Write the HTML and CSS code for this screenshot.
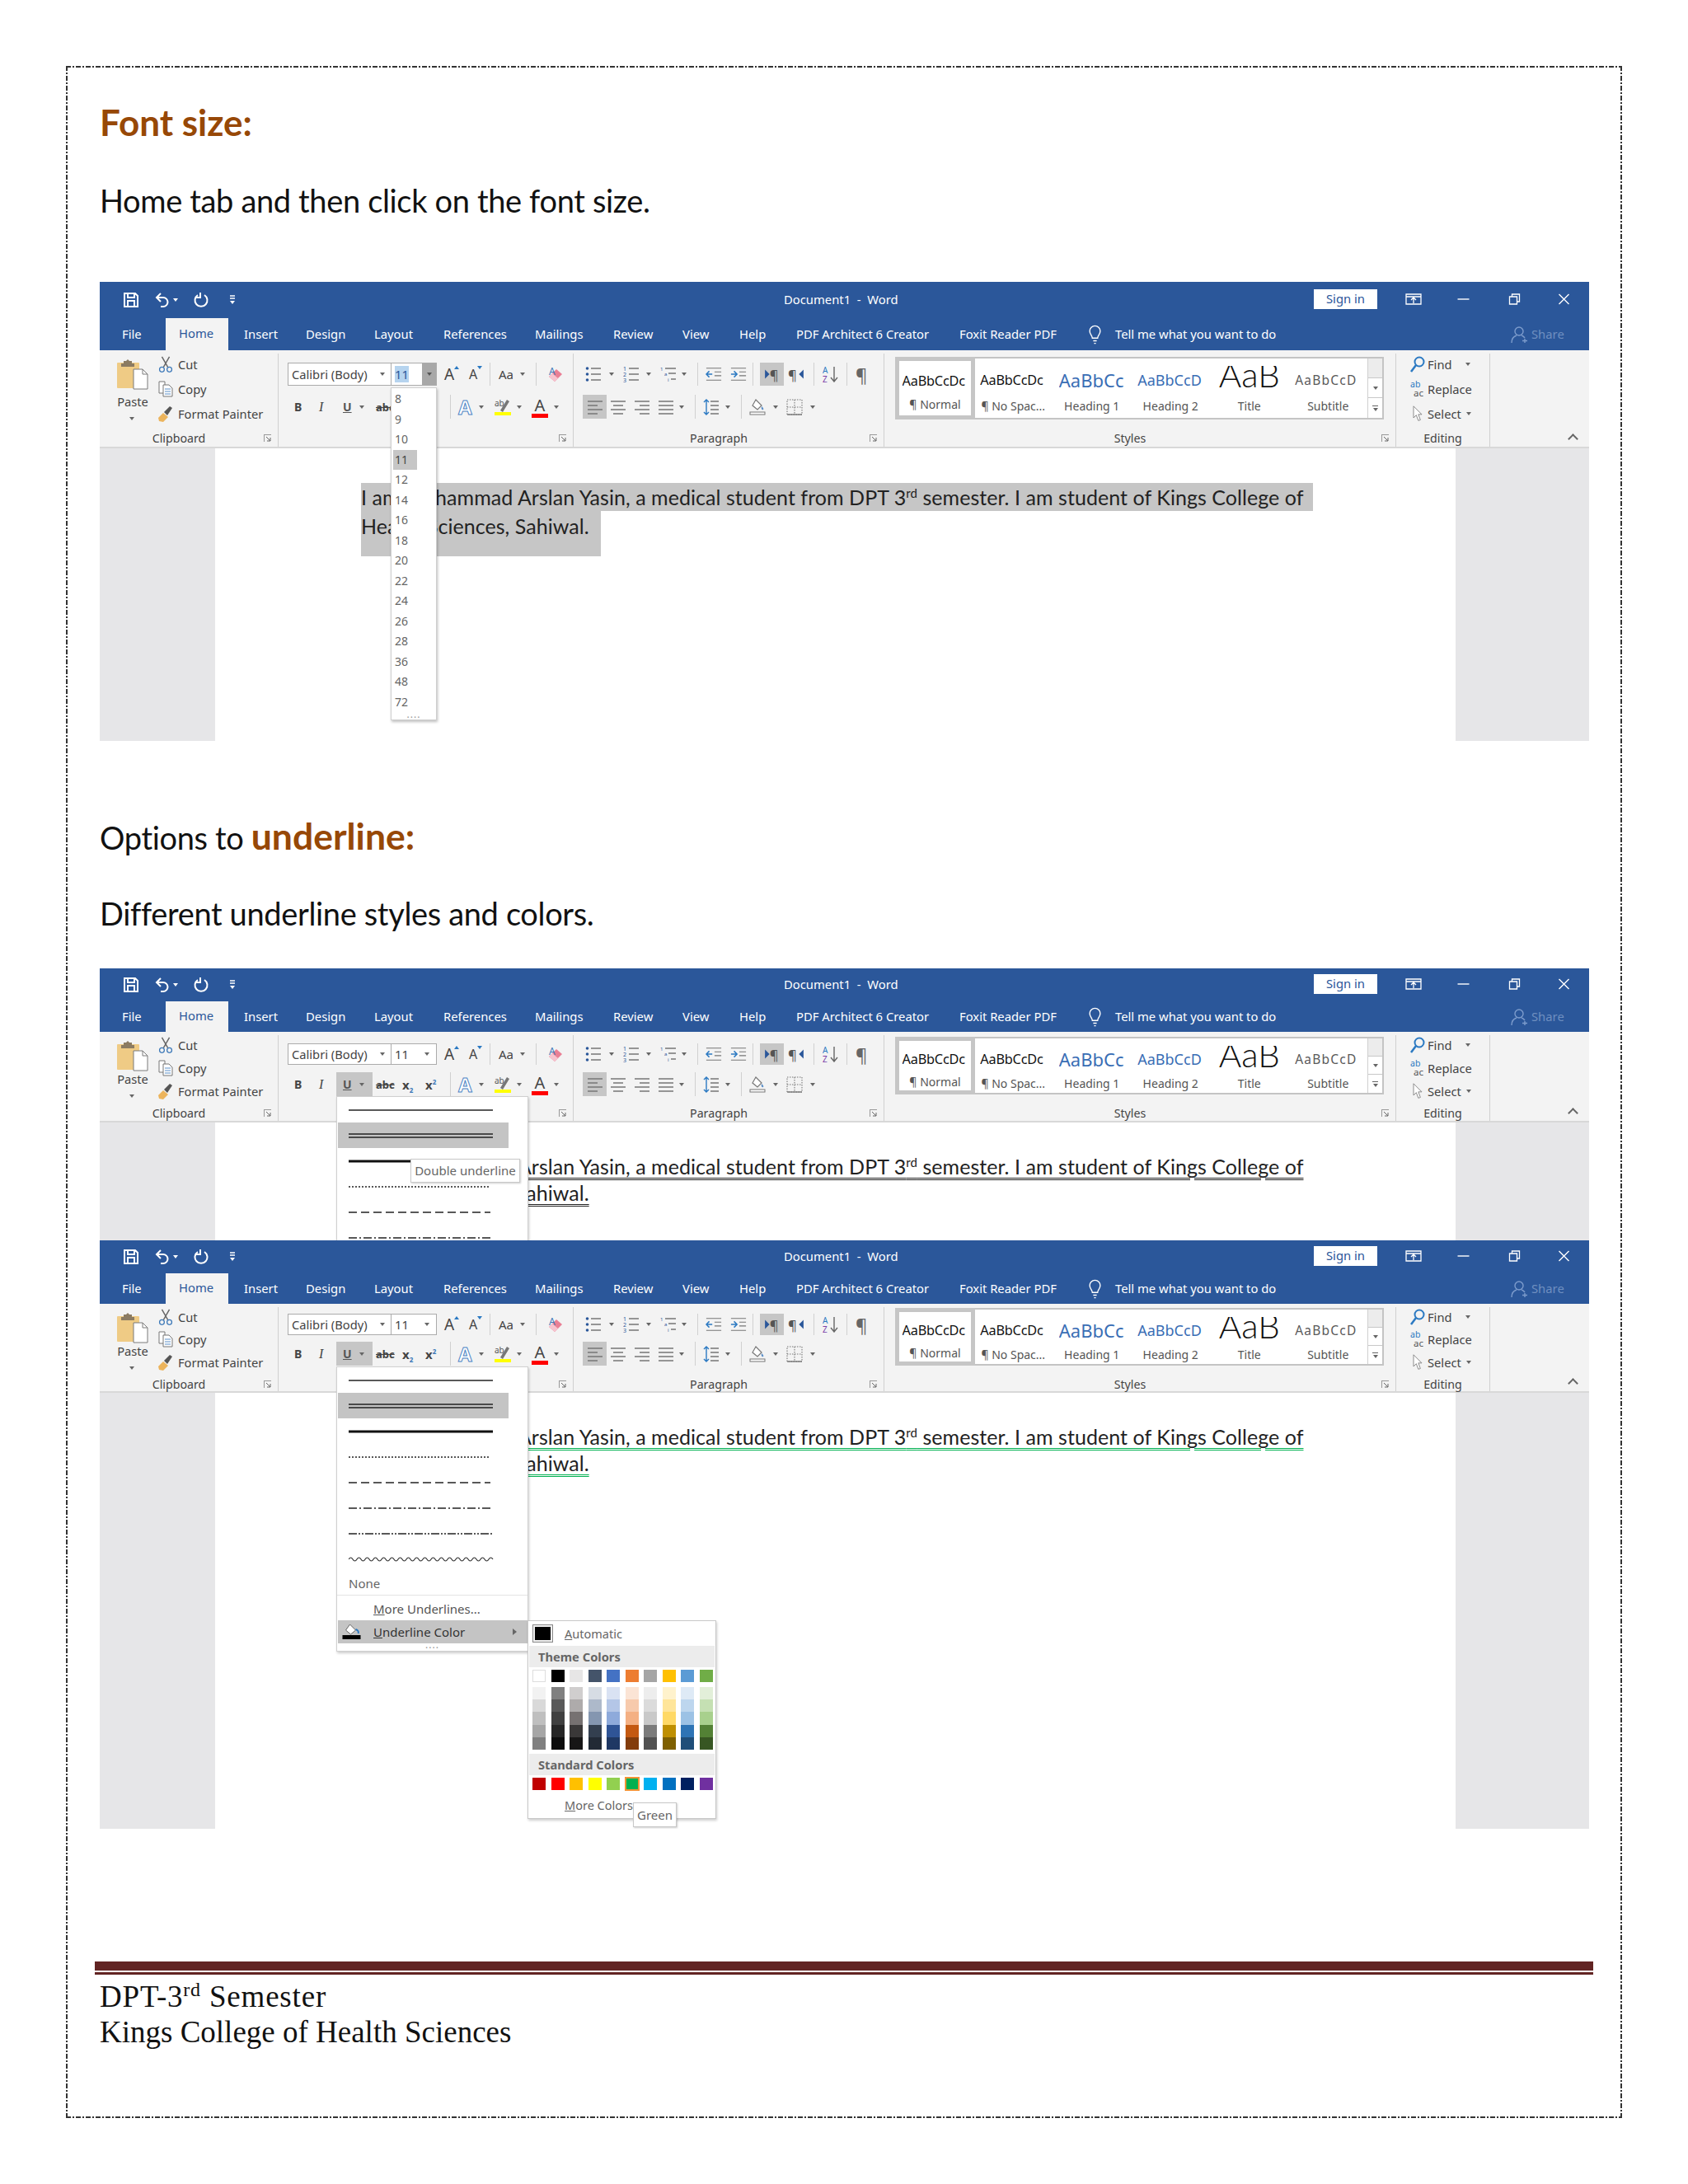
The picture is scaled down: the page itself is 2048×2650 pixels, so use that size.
FILE: index.html
```html
<!DOCTYPE html>
<html lang="en">
<head>
<meta charset="utf-8">
<title>Font size and underline options</title>
<link rel="stylesheet" href="styles.css">
</head>
<body>
<svg class="sprite" xmlns="http://www.w3.org/2000/svg">
<symbol id="save" viewBox="0 0 20 20"><path d="M2 2h13l3 3v13H2zM6 2v5h8V2M6 18v-7h8v7" fill="none" stroke="#fff" stroke-width="2"/></symbol>
<symbol id="undo" viewBox="0 0 20 20"><path d="M8 2L3 7l5 5M3 7h8a5 5 0 0 1 0 11H8" fill="none" stroke="#fff" stroke-width="2"/></symbol>
<symbol id="redo" viewBox="0 0 20 20"><path d="M6 4a7.500 7.500 0 1 0 8 0M9 1v6H3" fill="none" stroke="#fff" stroke-width="2"/></symbol>
<symbol id="qat" viewBox="0 0 8 12"><path d="M1 1h6M1 4h6" stroke="#fff" stroke-width="1.400"/><path d="M1 7h6l-3 4z" fill="#fff"/></symbol>
<symbol id="display" viewBox="0 0 20 14"><path d="M1 1h18v12H1zM1 4h18M10 12V6M7 8l3-3 3 3" fill="none" stroke="#fff" stroke-width="1.300"/></symbol>
<symbol id="min" viewBox="0 0 14 14"><path d="M0 7h14" stroke="#fff" stroke-width="1.400"/></symbol>
<symbol id="restore" viewBox="0 0 14 14"><path d="M1 4h9v9H1zM4 4V1h9v9h-3" fill="none" stroke="#fff" stroke-width="1.300"/></symbol>
<symbol id="close" viewBox="0 0 14 14"><path d="M1 1l12 12M13 1L1 13" stroke="#fff" stroke-width="1.400"/></symbol>
<symbol id="bulb" viewBox="0 0 16 22"><path d="M5 15c0-3-3-4-3-8a6 6 0 0 1 12 0c0 4-3 5-3 8zM6 18h4M7 21h2" fill="none" stroke="#fff" stroke-width="1.300"/></symbol>
<symbol id="person" viewBox="0 0 22 22"><circle cx="10" cy="7" r="5" fill="none" stroke="#7d9ccc" stroke-width="1.400"/><path d="M1 21c0-5 3-8 6-9M13 12c2 .5 3 1.500 4 3M17 16v5M14 18.500h6" fill="none" stroke="#7d9ccc" stroke-width="1.400"/></symbol>
<symbol id="paste" viewBox="0 0 38 38"><rect y="5" width="27" height="31" rx="1" fill="#efcb85"/><path d="M8 6V3h3l2-2 2 2h3v3h3v4H5V6z" fill="#8b7b62"/><path d="M20 13h11l6 6v18H20z" fill="#fff" stroke="#7a7a7a"/><path d="M31 13v6h6" fill="none" stroke="#7a7a7a"/></symbol>
<symbol id="cut" viewBox="0 0 20 22"><path d="M5 1l8 14M15 1L7 15" stroke="#666" stroke-width="1.600"/><circle cx="5" cy="18" r="3.200" fill="none" stroke="#3c78b8" stroke-width="1.400"/><circle cx="15" cy="18" r="3.200" fill="none" stroke="#3c78b8" stroke-width="1.400"/></symbol>
<symbol id="copy" viewBox="0 0 20 20"><path d="M2 1h7v14H2z" fill="#fff" stroke="#777"/><path d="M7 5h7l4 4v10H7z" fill="#fff" stroke="#777"/><path d="M9 10h7M9 13h7M9 16h7" stroke="#5b8fc8"/></symbol>
<symbol id="brush" viewBox="0 0 20 20"><path d="M2 19L1 15l6-6 6 5-6 6z" fill="#ecb45c"/><path d="M8 8l7-7 3 2-6 9z" fill="#555"/></symbol>
<symbol id="eraser" viewBox="0 0 20 20"><path d="M3 13l9-9 7 6-9 9z" fill="#ea7f95"/><path d="M3 13l4-4 7 6-4 4z" fill="#f6c4cf"/><text x="3" y="11" font-size="12" fill="#3c78b8" font-family="Noto Sans">A</text></symbol>
<symbol id="hilite" viewBox="0 0 20 20"><text x="0" y="9" font-size="10" fill="#555" font-family="Noto Sans">ab</text><path d="M7 14l8-13 3 2-8 13z" fill="#777"/><rect y="16" width="20" height="4" fill="#ffff00"/></symbol>
<symbol id="bul" viewBox="0 0 20 20"><g fill="#2b579a"><circle cx="2.500" cy="3" r="1.800"/><circle cx="2.500" cy="10" r="1.800"/><circle cx="2.500" cy="17" r="1.800"/></g><path d="M7 3h12M7 10h12M7 17h12" stroke="#777" stroke-width="1.300"/></symbol>
<symbol id="num" viewBox="0 0 20 20"><g fill="#2b579a" font-size="7" font-family="Noto Sans"><text y="6">1</text><text y="13">2</text><text y="20">3</text></g><path d="M7 3h12M7 10h12M7 17h12" stroke="#777" stroke-width="1.300"/></symbol>
<symbol id="multi" viewBox="0 0 20 20"><g fill="#2b579a" font-size="6" font-family="Noto Sans"><text y="6">1</text><text x="5" y="12">a</text><text x="9" y="19">i</text></g><path d="M6 3h13M10 9h9M13 16h6" stroke="#777" stroke-width="1.300"/></symbol>
<symbol id="dec" viewBox="0 0 22 20"><path d="M1 2h20M12 7h9M12 12h9M1 18h20" stroke="#777" stroke-width="1.300"/><path d="M9 10H2M5 6l-4 4 4 4" fill="none" stroke="#2b79c2" stroke-width="1.600"/></symbol>
<symbol id="inc" viewBox="0 0 22 20"><path d="M1 2h20M12 7h9M12 12h9M1 18h20" stroke="#777" stroke-width="1.300"/><path d="M1 10h7M5 6l4 4-4 4" fill="none" stroke="#2b79c2" stroke-width="1.600"/></symbol>
<symbol id="ltr" viewBox="0 0 18 18"><path d="M1 4v10l5-5z" fill="#2b579a"/><text x="6" y="15" font-size="15" fill="#555" font-family="Noto Sans">¶</text></symbol>
<symbol id="rtl" viewBox="0 0 18 18"><path d="M17 4v10l-5-5z" fill="#2b579a"/><text x="0" y="15" font-size="15" fill="#555" font-family="Noto Sans">¶</text></symbol>
<symbol id="sort" viewBox="0 0 20 20"><text x="0" y="9" font-size="10" fill="#2b79c2" font-family="Noto Sans">A</text><text x="0" y="20" font-size="10" fill="#7a3fa8" font-family="Noto Sans">Z</text><path d="M14 1v17M10 14l4 5 4-5" fill="none" stroke="#666" stroke-width="1.400"/></symbol>
<symbol id="lft" viewBox="0 0 20 20"><path d="M1 3h18M1 8h12M1 13h18M1 18h12" stroke="#777" stroke-width="1.400"/></symbol>
<symbol id="ctr" viewBox="0 0 20 20"><path d="M1 3h18M4 8h12M1 13h18M4 18h12" stroke="#777" stroke-width="1.400"/></symbol>
<symbol id="rgt" viewBox="0 0 20 20"><path d="M1 3h18M7 8h12M1 13h18M7 18h12" stroke="#777" stroke-width="1.400"/></symbol>
<symbol id="jus" viewBox="0 0 20 20"><path d="M1 3h18M1 8h18M1 13h18M1 18h18" stroke="#777" stroke-width="1.400"/></symbol>
<symbol id="lsp" viewBox="0 0 20 20"><path d="M4 1v18M1 4l3-3 3 3M1 16l3 3 3-3" fill="none" stroke="#2b79c2" stroke-width="1.400"/><path d="M9 3h10M9 8h10M9 13h10M9 18h10" stroke="#777" stroke-width="1.300"/></symbol>
<symbol id="shade" viewBox="0 0 20 20"><path d="M8 1l7 7-5 5-6-5z" fill="#fff" stroke="#777" stroke-width="1.200"/><path d="M15 9c2 2 3 3 2 4s-3 0-2-4" fill="#5b8fc8"/><rect x="1" y="16" width="18" height="3" fill="#fff" stroke="#777"/></symbol>
<symbol id="bord" viewBox="0 0 20 20"><path d="M1 1h18v18H1zM10 1v18M1 10h18" fill="none" stroke="#777" stroke-width="1.100" stroke-dasharray="1.500 1.500"/><path d="M1 19h18" stroke="#777" stroke-width="1.400"/></symbol>
<symbol id="launch" viewBox="0 0 10 10"><path d="M0 .5h9M.5 0v9" stroke="#999"/><path d="M3 3l5 5M8 4v4H4" fill="none" stroke="#666"/></symbol>
<symbol id="find" viewBox="0 0 20 20"><circle cx="12" cy="7" r="5.500" fill="none" stroke="#2b79c2" stroke-width="2"/><path d="M8 11l-6 8" stroke="#2b79c2" stroke-width="2.500"/></symbol>
<symbol id="repl" viewBox="0 0 20 20"><text x="1" y="8" font-size="10.500" fill="#2b79c2" font-family="Noto Sans">ab</text><text x="5" y="19" font-size="11.500" fill="#555" font-family="Noto Sans">ac</text></symbol>
<symbol id="sel" viewBox="0 0 16 24"><path d="M2 1v17l4-4 3 8 3-1-3-8h5z" fill="#fff" stroke="#777"/></symbol>
<symbol id="ucol" viewBox="0 0 22 20"><path d="M9 1l7 7-6 5-6-5z" fill="#fff" stroke="#666"/><path d="M16 7c3 1 4 3 3 5" fill="none" stroke="#2b79c2" stroke-width="2"/><rect y="14" width="22" height="5" fill="#000"/></symbol>
</svg>

<main class="frame">
<h1 class="head">Font size:</h1>
<p class="copy-line">Home tab and then click on the font size.</p>

<section class="word word-a">
<div class="title-bar">
<svg class="ico"><use href="#save"/></svg>
<span class="qa"><svg class="ico"><use href="#undo"/></svg><i class="ar ar-w"></i></span>
<svg class="ico"><use href="#redo"/></svg>
<svg class="ico-q"><use href="#qat"/></svg>
<span class="doc-name">Document1 &nbsp;-&nbsp; Word</span>
<span class="sign">Sign in</span>
<svg class="ico-d"><use href="#display"/></svg>
<svg class="ico-w"><use href="#min"/></svg>
<svg class="ico-w"><use href="#restore"/></svg>
<svg class="ico-w"><use href="#close"/></svg>
</div>
<nav class="tabs">
<span>File</span><span class="tab-on">Home</span><span>Insert</span><span>Design</span><span>Layout</span><span>References</span><span>Mailings</span><span>Review</span><span>View</span><span>Help</span><span>PDF Architect 6 Creator</span><span>Foxit Reader PDF</span><svg class="ico-b"><use href="#bulb"/></svg><span>Tell me what you want to do</span><svg class="ico-p"><use href="#person"/></svg><span class="share">Share</span>
</nav>
<div class="ribbon">
<div class="grp grp-clip">
<div class="grp-body clip">
<div class="paste"><svg class="ico-paste"><use href="#paste"/></svg><span class="paste-l">Paste</span><i class="ar"></i></div>
<div class="tools"><div class="tool"><svg class="ico"><use href="#cut"/></svg><span>Cut</span></div><div class="tool"><svg class="ico"><use href="#copy"/></svg><span>Copy</span></div><div class="tool"><svg class="ico"><use href="#brush"/></svg><span>Format Painter</span></div></div>
</div>
<div class="grp-foot"><span>Clipboard</span><svg class="ico-l"><use href="#launch"/></svg></div>
</div>
<div class="grp grp-font">
<div class="grp-body rows">
<div class="row f1"><span class="fbox">Calibri (Body)<i class="ar"></i></span><span class="sbox sbox-on"><b>11</b><i class="ar"></i></span><span class="ga">A<i class="up"></i></span><span class="ga ga-s">A<i class="dn"></i></span><i class="sep"></i><span class="aa">Aa</span><i class="ar"></i><i class="sep"></i><svg class="ico"><use href="#eraser"/></svg></div>
<div class="row f2"><b class="gl">B</b><i class="gl it">I</i><span class="uwrap"><u class="gl">U</u><i class="ar"></i></span><s class="abc">abc</s><span class="xs">x<sub>2</sub></span><span class="xs">x<sup>2</sup></span><i class="sep"></i><span class="tfx">A</span><i class="ar"></i><svg class="ico"><use href="#hilite"/></svg><i class="ar"></i><span class="fcol">A</span><i class="ar"></i></div>
</div>
<div class="grp-foot"><span></span><svg class="ico-l"><use href="#launch"/></svg></div>
</div>
<div class="grp grp-para">
<div class="grp-body rows">
<div class="row p1"><svg class="ico"><use href="#bul"/></svg><i class="ar"></i><svg class="ico"><use href="#num"/></svg><i class="ar"></i><svg class="ico"><use href="#multi"/></svg><i class="ar"></i><i class="sep"></i><svg class="ico"><use href="#dec"/></svg><svg class="ico"><use href="#inc"/></svg><i class="sep"></i><span class="tog"><svg class="ico"><use href="#ltr"/></svg></span><svg class="ico"><use href="#rtl"/></svg><i class="sep"></i><svg class="ico"><use href="#sort"/></svg><i class="sep"></i><span class="pil">¶</span></div>
<div class="row p2"><span class="tog"><svg class="ico"><use href="#lft"/></svg></span><svg class="ico"><use href="#ctr"/></svg><svg class="ico"><use href="#rgt"/></svg><svg class="ico"><use href="#jus"/></svg><i class="ar"></i><i class="sep"></i><svg class="ico"><use href="#lsp"/></svg><i class="ar"></i><i class="sep"></i><svg class="ico"><use href="#shade"/></svg><i class="ar"></i><svg class="ico"><use href="#bord"/></svg><i class="ar"></i></div>
</div>
<div class="grp-foot"><span>Paragraph</span><svg class="ico-l"><use href="#launch"/></svg></div>
</div>
<div class="grp grp-sty">
<div class="grp-body gal-wrap"><div class="gallery">
<div class="st st-on"><span class="pv pv-n">AaBbCcDc</span><span class="st-l">¶ Normal</span></div>
<div class="st"><span class="pv pv-n">AaBbCcDc</span><span class="st-l">¶ No Spac...</span></div>
<div class="st"><span class="pv pv-h1">AaBbCc</span><span class="st-l">Heading 1</span></div>
<div class="st"><span class="pv pv-h2">AaBbCcD</span><span class="st-l">Heading 2</span></div>
<div class="st"><span class="pv pv-t">AaB</span><span class="st-l">Title</span></div>
<div class="st"><span class="pv pv-s">AaBbCcD</span><span class="st-l">Subtitle</span></div>
<div class="scr"><span></span><span><i class="ar"></i></span><span><i class="ar"></i></span></div>
</div></div>
<div class="grp-foot"><span>Styles</span><svg class="ico-l"><use href="#launch"/></svg></div>
</div>
<div class="grp grp-edit">
<div class="grp-body tools edit"><div class="tool"><svg class="ico"><use href="#find"/></svg><span>Find</span><i class="ar ar-f"></i></div><div class="tool"><svg class="ico"><use href="#repl"/></svg><span>Replace</span></div><div class="tool"><svg class="ico"><use href="#sel"/></svg><span>Select</span><i class="ar ar-s"></i></div></div>
<div class="grp-foot foot-e"><span>Editing</span></div>
</div>
<div class="collapse"><i class="chev"></i></div>
</div>
<div class="doc">
<div class="side"></div>
<div class="page">
<p class="tx tx-sel tx-1">I am Muhammad Arslan Yasin, a medical student from DPT 3<sup>rd</sup> semester. I am student of Kings College of</p>
<p class="tx tx-sel tx-2">Health Sciences, Sahiwal.</p>
</div>
<div class="side"></div>
</div>
<div class="size-menu">
<span>8</span><span>9</span><span>10</span><span class="size-on">11</span><span>12</span><span>14</span><span>16</span><span>18</span><span>20</span><span>22</span><span>24</span><span>26</span><span>28</span><span>36</span><span>48</span><span>72</span><em class="grip">····</em>
</div>
</section>

<h2 class="copy-line sub">Options to <strong class="head-in">underline:</strong></h2>
<p class="copy-line sub2">Different underline styles and colors.</p>

<section class="word word-b">
<div class="title-bar">
<svg class="ico"><use href="#save"/></svg>
<span class="qa"><svg class="ico"><use href="#undo"/></svg><i class="ar ar-w"></i></span>
<svg class="ico"><use href="#redo"/></svg>
<svg class="ico-q"><use href="#qat"/></svg>
<span class="doc-name">Document1 &nbsp;-&nbsp; Word</span>
<span class="sign">Sign in</span>
<svg class="ico-d"><use href="#display"/></svg>
<svg class="ico-w"><use href="#min"/></svg>
<svg class="ico-w"><use href="#restore"/></svg>
<svg class="ico-w"><use href="#close"/></svg>
</div>
<nav class="tabs">
<span>File</span><span class="tab-on">Home</span><span>Insert</span><span>Design</span><span>Layout</span><span>References</span><span>Mailings</span><span>Review</span><span>View</span><span>Help</span><span>PDF Architect 6 Creator</span><span>Foxit Reader PDF</span><svg class="ico-b"><use href="#bulb"/></svg><span>Tell me what you want to do</span><svg class="ico-p"><use href="#person"/></svg><span class="share">Share</span>
</nav>
<div class="ribbon">
<div class="grp grp-clip">
<div class="grp-body clip">
<div class="paste"><svg class="ico-paste"><use href="#paste"/></svg><span class="paste-l">Paste</span><i class="ar"></i></div>
<div class="tools"><div class="tool"><svg class="ico"><use href="#cut"/></svg><span>Cut</span></div><div class="tool"><svg class="ico"><use href="#copy"/></svg><span>Copy</span></div><div class="tool"><svg class="ico"><use href="#brush"/></svg><span>Format Painter</span></div></div>
</div>
<div class="grp-foot"><span>Clipboard</span><svg class="ico-l"><use href="#launch"/></svg></div>
</div>
<div class="grp grp-font">
<div class="grp-body rows">
<div class="row f1"><span class="fbox">Calibri (Body)<i class="ar"></i></span><span class="sbox">11<i class="ar"></i></span><span class="ga">A<i class="up"></i></span><span class="ga ga-s">A<i class="dn"></i></span><i class="sep"></i><span class="aa">Aa</span><i class="ar"></i><i class="sep"></i><svg class="ico"><use href="#eraser"/></svg></div>
<div class="row f2"><b class="gl">B</b><i class="gl it">I</i><span class="uwrap uwrap-on"><u class="gl">U</u><i class="ar"></i></span><s class="abc">abc</s><span class="xs">x<sub>2</sub></span><span class="xs">x<sup>2</sup></span><i class="sep"></i><span class="tfx">A</span><i class="ar"></i><svg class="ico"><use href="#hilite"/></svg><i class="ar"></i><span class="fcol">A</span><i class="ar"></i></div>
</div>
<div class="grp-foot"><span></span><svg class="ico-l"><use href="#launch"/></svg></div>
</div>
<div class="grp grp-para">
<div class="grp-body rows">
<div class="row p1"><svg class="ico"><use href="#bul"/></svg><i class="ar"></i><svg class="ico"><use href="#num"/></svg><i class="ar"></i><svg class="ico"><use href="#multi"/></svg><i class="ar"></i><i class="sep"></i><svg class="ico"><use href="#dec"/></svg><svg class="ico"><use href="#inc"/></svg><i class="sep"></i><span class="tog"><svg class="ico"><use href="#ltr"/></svg></span><svg class="ico"><use href="#rtl"/></svg><i class="sep"></i><svg class="ico"><use href="#sort"/></svg><i class="sep"></i><span class="pil">¶</span></div>
<div class="row p2"><span class="tog"><svg class="ico"><use href="#lft"/></svg></span><svg class="ico"><use href="#ctr"/></svg><svg class="ico"><use href="#rgt"/></svg><svg class="ico"><use href="#jus"/></svg><i class="ar"></i><i class="sep"></i><svg class="ico"><use href="#lsp"/></svg><i class="ar"></i><i class="sep"></i><svg class="ico"><use href="#shade"/></svg><i class="ar"></i><svg class="ico"><use href="#bord"/></svg><i class="ar"></i></div>
</div>
<div class="grp-foot"><span>Paragraph</span><svg class="ico-l"><use href="#launch"/></svg></div>
</div>
<div class="grp grp-sty">
<div class="grp-body gal-wrap"><div class="gallery">
<div class="st st-on"><span class="pv pv-n">AaBbCcDc</span><span class="st-l">¶ Normal</span></div>
<div class="st"><span class="pv pv-n">AaBbCcDc</span><span class="st-l">¶ No Spac...</span></div>
<div class="st"><span class="pv pv-h1">AaBbCc</span><span class="st-l">Heading 1</span></div>
<div class="st"><span class="pv pv-h2">AaBbCcD</span><span class="st-l">Heading 2</span></div>
<div class="st"><span class="pv pv-t">AaB</span><span class="st-l">Title</span></div>
<div class="st"><span class="pv pv-s">AaBbCcD</span><span class="st-l">Subtitle</span></div>
<div class="scr"><span></span><span><i class="ar"></i></span><span><i class="ar"></i></span></div>
</div></div>
<div class="grp-foot"><span>Styles</span><svg class="ico-l"><use href="#launch"/></svg></div>
</div>
<div class="grp grp-edit">
<div class="grp-body tools edit"><div class="tool"><svg class="ico"><use href="#find"/></svg><span>Find</span><i class="ar ar-f"></i></div><div class="tool"><svg class="ico"><use href="#repl"/></svg><span>Replace</span></div><div class="tool"><svg class="ico"><use href="#sel"/></svg><span>Select</span><i class="ar ar-s"></i></div></div>
<div class="grp-foot foot-e"><span>Editing</span></div>
</div>
<div class="collapse"><i class="chev"></i></div>
</div>
<div class="doc">
<div class="side"></div>
<div class="page">
<p class="tx tx-u">I am Muhammad Arslan Yasin, a medical student from DPT 3<sup>rd</sup> semester. I am student of Kings College of</p>
<p class="tx tx-u">Health Sciences, Sahiwal.</p>
</div>
<div class="side"></div>
</div>
<div class="ul-menu">
<div class="ul-row"><svg class="ul"><line class="l1" x1="0" x2="175" y1="4" y2="4"/></svg></div>
<div class="ul-row ul-on"><svg class="ul"><line class="l1" x1="0" x2="175" y1="2" y2="2"/><line class="l1" x1="0" x2="175" y1="6" y2="6"/></svg></div>
<div class="ul-row"><svg class="ul"><line class="l3" x1="0" x2="175" y1="4" y2="4"/></svg></div>
<div class="ul-row"><svg class="ul"><line class="ld" x1="0" x2="172" y1="4" y2="4"/></svg></div>
<div class="ul-row"><svg class="ul"><line class="lh" x1="0" x2="172" y1="4" y2="4"/></svg></div>
<div class="ul-row"><svg class="ul"><line class="lp" x1="0" x2="175" y1="4" y2="4"/></svg></div>
</div>
<div class="tip tip-dbl">Double underline</div>
</section>

<section class="word word-c">
<div class="title-bar">
<svg class="ico"><use href="#save"/></svg>
<span class="qa"><svg class="ico"><use href="#undo"/></svg><i class="ar ar-w"></i></span>
<svg class="ico"><use href="#redo"/></svg>
<svg class="ico-q"><use href="#qat"/></svg>
<span class="doc-name">Document1 &nbsp;-&nbsp; Word</span>
<span class="sign">Sign in</span>
<svg class="ico-d"><use href="#display"/></svg>
<svg class="ico-w"><use href="#min"/></svg>
<svg class="ico-w"><use href="#restore"/></svg>
<svg class="ico-w"><use href="#close"/></svg>
</div>
<nav class="tabs">
<span>File</span><span class="tab-on">Home</span><span>Insert</span><span>Design</span><span>Layout</span><span>References</span><span>Mailings</span><span>Review</span><span>View</span><span>Help</span><span>PDF Architect 6 Creator</span><span>Foxit Reader PDF</span><svg class="ico-b"><use href="#bulb"/></svg><span>Tell me what you want to do</span><svg class="ico-p"><use href="#person"/></svg><span class="share">Share</span>
</nav>
<div class="ribbon">
<div class="grp grp-clip">
<div class="grp-body clip">
<div class="paste"><svg class="ico-paste"><use href="#paste"/></svg><span class="paste-l">Paste</span><i class="ar"></i></div>
<div class="tools"><div class="tool"><svg class="ico"><use href="#cut"/></svg><span>Cut</span></div><div class="tool"><svg class="ico"><use href="#copy"/></svg><span>Copy</span></div><div class="tool"><svg class="ico"><use href="#brush"/></svg><span>Format Painter</span></div></div>
</div>
<div class="grp-foot"><span>Clipboard</span><svg class="ico-l"><use href="#launch"/></svg></div>
</div>
<div class="grp grp-font">
<div class="grp-body rows">
<div class="row f1"><span class="fbox">Calibri (Body)<i class="ar"></i></span><span class="sbox">11<i class="ar"></i></span><span class="ga">A<i class="up"></i></span><span class="ga ga-s">A<i class="dn"></i></span><i class="sep"></i><span class="aa">Aa</span><i class="ar"></i><i class="sep"></i><svg class="ico"><use href="#eraser"/></svg></div>
<div class="row f2"><b class="gl">B</b><i class="gl it">I</i><span class="uwrap uwrap-on"><u class="gl">U</u><i class="ar"></i></span><s class="abc">abc</s><span class="xs">x<sub>2</sub></span><span class="xs">x<sup>2</sup></span><i class="sep"></i><span class="tfx">A</span><i class="ar"></i><svg class="ico"><use href="#hilite"/></svg><i class="ar"></i><span class="fcol">A</span><i class="ar"></i></div>
</div>
<div class="grp-foot"><span></span><svg class="ico-l"><use href="#launch"/></svg></div>
</div>
<div class="grp grp-para">
<div class="grp-body rows">
<div class="row p1"><svg class="ico"><use href="#bul"/></svg><i class="ar"></i><svg class="ico"><use href="#num"/></svg><i class="ar"></i><svg class="ico"><use href="#multi"/></svg><i class="ar"></i><i class="sep"></i><svg class="ico"><use href="#dec"/></svg><svg class="ico"><use href="#inc"/></svg><i class="sep"></i><span class="tog"><svg class="ico"><use href="#ltr"/></svg></span><svg class="ico"><use href="#rtl"/></svg><i class="sep"></i><svg class="ico"><use href="#sort"/></svg><i class="sep"></i><span class="pil">¶</span></div>
<div class="row p2"><span class="tog"><svg class="ico"><use href="#lft"/></svg></span><svg class="ico"><use href="#ctr"/></svg><svg class="ico"><use href="#rgt"/></svg><svg class="ico"><use href="#jus"/></svg><i class="ar"></i><i class="sep"></i><svg class="ico"><use href="#lsp"/></svg><i class="ar"></i><i class="sep"></i><svg class="ico"><use href="#shade"/></svg><i class="ar"></i><svg class="ico"><use href="#bord"/></svg><i class="ar"></i></div>
</div>
<div class="grp-foot"><span>Paragraph</span><svg class="ico-l"><use href="#launch"/></svg></div>
</div>
<div class="grp grp-sty">
<div class="grp-body gal-wrap"><div class="gallery">
<div class="st st-on"><span class="pv pv-n">AaBbCcDc</span><span class="st-l">¶ Normal</span></div>
<div class="st"><span class="pv pv-n">AaBbCcDc</span><span class="st-l">¶ No Spac...</span></div>
<div class="st"><span class="pv pv-h1">AaBbCc</span><span class="st-l">Heading 1</span></div>
<div class="st"><span class="pv pv-h2">AaBbCcD</span><span class="st-l">Heading 2</span></div>
<div class="st"><span class="pv pv-t">AaB</span><span class="st-l">Title</span></div>
<div class="st"><span class="pv pv-s">AaBbCcD</span><span class="st-l">Subtitle</span></div>
<div class="scr"><span></span><span><i class="ar"></i></span><span><i class="ar"></i></span></div>
</div></div>
<div class="grp-foot"><span>Styles</span><svg class="ico-l"><use href="#launch"/></svg></div>
</div>
<div class="grp grp-edit">
<div class="grp-body tools edit"><div class="tool"><svg class="ico"><use href="#find"/></svg><span>Find</span><i class="ar ar-f"></i></div><div class="tool"><svg class="ico"><use href="#repl"/></svg><span>Replace</span></div><div class="tool"><svg class="ico"><use href="#sel"/></svg><span>Select</span><i class="ar ar-s"></i></div></div>
<div class="grp-foot foot-e"><span>Editing</span></div>
</div>
<div class="collapse"><i class="chev"></i></div>
</div>
<div class="doc">
<div class="side"></div>
<div class="page">
<p class="tx tx-u tx-g">I am Muhammad Arslan Yasin, a medical student from DPT 3<sup>rd</sup> semester. I am student of Kings College of</p>
<p class="tx tx-u tx-g">Health Sciences, Sahiwal.</p>
</div>
<div class="side"></div>
</div>
<div class="ul-menu ul-full">
<div class="ul-row"><svg class="ul"><line class="l1" x1="0" x2="175" y1="4" y2="4"/></svg></div>
<div class="ul-row ul-on"><svg class="ul"><line class="l1" x1="0" x2="175" y1="2" y2="2"/><line class="l1" x1="0" x2="175" y1="6" y2="6"/></svg></div>
<div class="ul-row"><svg class="ul"><line class="l3" x1="0" x2="175" y1="4" y2="4"/></svg></div>
<div class="ul-row"><svg class="ul"><line class="ld" x1="0" x2="172" y1="4" y2="4"/></svg></div>
<div class="ul-row"><svg class="ul"><line class="lh" x1="0" x2="172" y1="4" y2="4"/></svg></div>
<div class="ul-row"><svg class="ul"><line class="lp" x1="0" x2="175" y1="4" y2="4"/></svg></div>
<div class="ul-row"><svg class="ul"><line class="lpp" x1="0" x2="175" y1="4" y2="4"/></svg></div>
<div class="ul-row"><svg class="ul"><path class="lw" d="M0 4q2.500-4 5 0t5 0t5 0t5 0t5 0t5 0t5 0t5 0t5 0t5 0t5 0t5 0t5 0t5 0t5 0t5 0t5 0t5 0t5 0t5 0t5 0t5 0t5 0t5 0t5 0t5 0t5 0t5 0t5 0t5 0t5 0t5 0t5 0t5 0t5 0"/></svg></div>
<div class="ul-none">None</div>
<div class="ul-more"><span class="acc">M</span>ore Underlines...</div>
<div class="ul-color"><svg class="ico-uc"><use href="#ucol"/></svg><span class="ul-ctext"><span class="acc">U</span>nderline Color</span><i class="ar-r"></i></div>
<em class="grip grip-u">····</em>
</div>
<div class="col-menu">
<div class="auto"><span class="auto-sw"><i></i></span><span><span class="acc">A</span>utomatic</span></div>
<div class="col-h">Theme Colors</div>
<div class="sw-row"><i class="t1"></i><i class="t2"></i><i class="t3"></i><i class="t4"></i><i class="t5"></i><i class="t6"></i><i class="t7"></i><i class="t8"></i><i class="t9"></i><i class="t10"></i></div>
<div class="sw-row sw-sh"><i class="s1"></i><i class="s2"></i><i class="s3"></i><i class="s4"></i><i class="s5"></i><i class="s6"></i><i class="s7"></i><i class="s8"></i><i class="s9"></i><i class="s10"></i></div>
<div class="col-h col-h2">Standard Colors</div>
<div class="sw-row"><i class="c1"></i><i class="c2"></i><i class="c3"></i><i class="c4"></i><i class="c5"></i><i class="c6 c-on"></i><i class="c7"></i><i class="c8"></i><i class="c9"></i><i class="c10"></i></div>
<div class="more-c"><span class="acc">M</span>ore Colors</div>
</div>
<div class="tip tip-g">Green</div>
</section>

<footer class="foot">
<div class="rule"></div>
<p class="foot-t foot-a">DPT-3<sup>rd</sup> Semester</p>
<p class="foot-t">Kings College of Health Sciences</p>
</footer>
</main>
</body>
</html>
```
FILE: styles.css
```css
* { box-sizing: border-box; }
html, body { margin: 0; padding: 0; background: #fff; }
body { font-family: "Noto Sans", sans-serif; color: #444; }
p, h1, h2 { margin: 0; font-weight: 400; }
.sprite { position: absolute; width: 0; height: 0; overflow: hidden; }

.frame {
  margin: 80px 0 0 80px;
  width: 1888px;
  height: 2490px;
  padding: 38px 0 0 41px;
  background:
    repeating-linear-gradient(90deg, #333 0 6px, transparent 6px 8px, #333 8px 10px, transparent 10px 12px) top / 100% 2px no-repeat,
    repeating-linear-gradient(90deg, #333 0 6px, transparent 6px 8px, #333 8px 10px, transparent 10px 12px) bottom / 100% 2px no-repeat,
    repeating-linear-gradient(180deg, #333 0 6px, transparent 6px 8px, #333 8px 10px, transparent 10px 12px) left / 2px 100% no-repeat,
    repeating-linear-gradient(180deg, #333 0 6px, transparent 6px 8px, #333 8px 10px, transparent 10px 12px) right / 2px 100% no-repeat;
}
.head { font: 700 44px/60px Lato, sans-serif; color: #974806; height: 60px; }
.head-in { font: 700 44.500px/60px Lato, sans-serif; color: #974806; letter-spacing: 0; }
.copy-line { font: 400 38px/60px Lato, sans-serif; color: #111; height: 60px; margin-top: 35px; letter-spacing: -.35px; }
.sub { margin-top: 85px; }
.sub2 { margin-top: 34px; }

.word {
  --title: 44px; --tabs: 39px; --rib: 119px;
  --r1t: 15px; --r1h: 28px; --r2g: 11px; --fm: 0px;
  --tool: 30px; --toolt: -2px; --pad: 41px; --lh: 35px; --galt: 8px; --galh: 76px; --pvh: 50px; --pastel: 4px;
  position: relative;
  width: 1807px;
  display: flex;
  flex-direction: column;
  overflow: hidden;
  background: #fff;
}
.word-a { height: 557px; margin-top: 69px; }
.word-b { height: 330px; margin-top: 37px; --title: 40px; --tabs: 37px; --rib: 110px; --r1t: 14px; --r1h: 26px; --r2g: 9px; --tool: 28px; --toolt: -2px; --pad: 37px; --lh: 32px; --galt: 6px; --galh: 70px; --pvh: 47px; --pastel: -1px; --fm: 1px; }
.word-c { height: 714px; --title: 40px; --tabs: 37px; --rib: 108px; --r1t: 12px; --r1h: 26px; --r2g: 8px; --tool: 27.500px; --toolt: -2px; --pad: 37px; --lh: 32px; --galt: 5px; --galh: 70px; --pvh: 47px; --pastel: -1px; --fm: 2px; }

.title-bar {
  height: var(--title);
  background: #2b579a;
  color: #fff;
  display: grid;
  grid-template-columns: 38px 47px 44px 673px 643px 111px 63px 62px 60px auto;
  padding-left: 28px;
  align-items: center;
  justify-items: start;
  font-size: 14.800px;
}
.ico { width: 20px; height: 20px; display: block; }
.ico-q { width: 8px; height: 12px; }
.ico-d { width: 20px; height: 14px; margin-bottom: 2px; }
.ico-w { width: 15px; height: 14px; margin-bottom: 2px; }
.ico-b { width: 17px; height: 24px; }
.ico-p { width: 22px; height: 22px; }
.qa { display: flex; align-items: center; gap: 3px; }
.doc-name { white-space: nowrap; margin-bottom: 2px; }
.sign { width: 77px; height: 24px; background: #fff; color: #2b579a; text-align: center; line-height: 22px; margin-bottom: 2px; }

.tabs {
  height: var(--tabs);
  background: #2b579a;
  color: #fff;
  display: grid;
  grid-template-columns: 53px 95px 75px 83px 84px 111px 95px 84px 69px 69px 198px 156px 33px 480px 25px auto;
  padding-left: 27px;
  align-items: center;
  justify-items: start;
  font-size: 14.800px;
  white-space: nowrap;
}
.tabs > span { margin-bottom: 2px; }
.tabs > .tab-on { width: 76px; height: var(--tabs); margin-bottom: 0; line-height: calc(var(--tabs) - 2px); padding-left: 16px; background: #f3f3f3; color: #2b579a; }
.share { color: #6f8fc0; }

.ribbon {
  height: var(--rib);
  background: #f3f3f3;
  border-bottom: 2px solid #d8d8d8;
  display: grid;
  grid-template-columns: 217px 358px 377px 621px 114px 1fr;
  font-size: 14.700px;
  color: #444;
}
.grp { display: flex; flex-direction: column; border-right: 1px solid #d0d0d0; margin-top: 4px; min-height: 0; }
.grp-body { flex: 1; min-height: 0; }
.grp-foot { height: 20px; margin-bottom: calc(0px - var(--fm)); display: grid; grid-template-columns: 1fr 24px; align-items: center; justify-items: center; font-size: 14.200px; line-height: 20px; }
.foot-e { grid-template-columns: 1fr; }
.ico-l { width: 10px; height: 10px; }
.collapse { display: flex; justify-content: flex-end; align-items: flex-end; padding: 0 15px 5px 0; }
.chev { width: 9px; height: 9px; border-left: 2px solid #666; border-top: 2px solid #666; transform: rotate(45deg); }

.ar { display: inline-block; width: 0; height: 0; border: 3.500px solid transparent; border-top: 4px solid #666; border-bottom: 0; flex: none; }
.ar-w { border-top-color: #fff; }

.clip { display: flex; padding-left: 21px; }
.paste { width: 49px; display: flex; flex-direction: column; align-items: flex-start; padding-top: 6px; }
.ico-paste { width: 38px; height: 38px; }
.paste-l { margin-top: var(--pastel); width: 38px; text-align: center; line-height: 20px; }
.paste .ar { margin: 9px 0 0 15px; }
.tools { display: flex; flex-direction: column; margin-top: var(--toolt); }
.tool { height: var(--tool); display: flex; align-items: center; gap: 5px; white-space: nowrap; flex: none; }
.edit { padding-left: 16px; }
.edit .tool { gap: 2px; }
.ar-f { margin-left: 14px; }
.ar-s { margin-left: 4px; }

.rows { padding-top: calc(var(--r1t) - 4px); }
.row { display: grid; align-items: center; justify-items: start; height: var(--r1h); }
.f2, .p2 { height: 29px; margin-top: var(--r2g); }
.f1 { padding-left: 11px; grid-template-columns: 125px 65px 30px 25px 11px 26px 19px 13px auto; }
.f2 { padding-left: 19px; grid-template-columns: 30px 21px 48px 32px 28px 30px 10px 25px 19px 27px 18px 27px auto; }
.p1 { padding-left: 14px; grid-template-columns: 29px 17px 28px 17px 26px 19px 10px 30px 27px 9px 34px 31px 11px 29px 11px auto; }
.p2 { padding-left: 11px; grid-template-columns: 33px 29px 29px 26px 19px 10px 27px 19px 10px 29px 16px 29px auto; }
.sep { width: 1px; height: 100%; background: #d0d0d0; }

.fbox, .sbox { height: var(--r1h); background: #fff; border: 1px solid #ababab; display: flex; align-items: center; justify-content: space-between; padding: 0 7px 0 4px; white-space: nowrap; }
.fbox { width: 126px; }
.sbox { width: 56px; padding-right: 8px; }
.sbox-on { padding-right: 0; align-items: stretch; }
.sbox-on b { font-weight: 400; background: #b6d4ef; color: #2b579a; height: 20px; align-self: center; line-height: 20px; }
.sbox-on .ar { width: 17px; height: 100%; background: #a8a8a8; border: 0; display: flex; align-items: center; justify-content: center; }
.sbox-on .ar::before { content: ""; border: 3.500px solid transparent; border-top: 4px solid #555; border-bottom: 0; }
.ga { font-size: 19px; display: flex; align-items: flex-start; line-height: 24px; }
.ga-s { font-size: 16px; }
.up, .dn { width: 0; height: 0; border: 3px solid transparent; margin-top: 2px; }
.up { border-bottom: 4px solid #2b79c2; border-top: 0; }
.dn { border-top: 4px solid #2b79c2; border-bottom: 0; }
.aa { font-size: 15px; }
.gl { font-size: 14px; font-family: "Liberation Serif", serif; }
b.gl { font-family: "Noto Sans", sans-serif; font-weight: 700; }
.it { font-size: 16px; }
u.gl { font-family: "Noto Sans", sans-serif; font-weight: 700; color: #555; }
.uwrap { width: 44px; height: 29px; display: flex; align-items: center; gap: 9px; padding-left: 8px; }
.uwrap-on { background: #c6c6c6; }
.abc { font-size: 13px; font-weight: 700; }
.xs { font-size: 15px; font-weight: 700; line-height: 20px; }
.xs sub, .xs sup { font-size: 8px; color: #3c78b8; line-height: 0; }
.tfx { font-size: 24px; line-height: 26px; color: #fff; font-weight: 700; -webkit-text-stroke: 1px #4f86c6; }
.fcol { font-size: 20px; line-height: 21px; width: 20px; text-align: center; border-bottom: 5px solid #f00; height: 26px; }
.tog { width: 29px; height: 29px; background: #c6c6c6; display: flex; align-items: center; justify-content: center; }
.p1 .tog { height: var(--r1h); }
.pil { font-size: 22px; line-height: 24px; color: #666; }

.gal-wrap { padding: var(--galt) 0 0 13px; margin-top: -4px; }
.gallery { width: 593px; height: var(--galh); background: #fff; border: 2px solid #c4c4c4; display: grid; grid-template-columns: 93.500px repeat(5, 95.500px) 1fr; }
.st { display: flex; flex-direction: column; align-items: center; overflow: hidden; height: 100%; }
.st-on { border: 5px solid #c6c6c6; margin: -2px 0 -2px -2px; width: 97px; height: auto; }
.pv { height: var(--pvh); line-height: calc(var(--pvh) + 3px); white-space: nowrap; width: 80px; overflow: hidden; text-align: left; flex: none; color: #111; font-size: 16.300px; }
.st-on .pv { height: calc(var(--pvh) - 5px); line-height: calc(var(--pvh) - 2px); }
.pv-n { letter-spacing: -.2px; }
.pv-h1 { font-size: 22px; color: #3a6eb5; }
.pv-h2 { font-size: 18px; color: #3a6eb5; }
.pv-t { font: 300 42px/20px Lato, sans-serif; height: calc(var(--pvh) - 9px); margin-top: 9px; color: #111; text-align: center; }
.pv-s { font-size: 15.500px; color: #5a5a5a; letter-spacing: 1.200px; }
.st-l { color: #555; font-size: 14px; line-height: 16px; white-space: nowrap; }
.scr { display: grid; grid-template-rows: 1fr 1fr 1fr; border-left: 1px solid #d0d0d0; }
.scr span { display: flex; align-items: center; justify-content: center; border-bottom: 1px solid #c8c8c8; }
.scr span:first-child { background: #ececec; }
.scr span:last-child { flex-direction: column; gap: 2px; border-bottom: 0; }
.scr span:last-child::before { content: ""; width: 7px; height: 1px; background: #666; }

.doc { flex: 1; display: grid; grid-template-columns: 140px 1fr 162px; min-height: 0; }
.side { background: #e6e6e8; }
.page { background: #fff; padding: var(--pad) 0 0 177px; }
.tx { font: 400 25px/var(--lh) Lato, sans-serif; color: #222; white-space: nowrap; letter-spacing: .05px; }
.tx sup { font-size: 15px; line-height: 0; }
.tx-sel { background: #c6c6c6; }
.tx-1 { width: 1155px; height: 34px; margin-top: 1px; line-height: 34px; }
.tx-2 { width: 291px; height: 55px; line-height: 36px; }
.tx-u { text-decoration: underline double #222; text-decoration-thickness: 1px; text-underline-offset: 4px; }
.tx-g { text-decoration-color: #00b050; }

.size-menu {
  position: absolute; left: 353px; top: 128px; width: 56px; height: 404px;
  background: #fff; border: 1px solid #cfcfcf; box-shadow: 1px 2px 3px rgba(0,0,0,.25);
  display: flex; flex-direction: column; padding-top: 1px; font-size: 14px; color: #666;
}
.size-menu span { height: 24.500px; line-height: 24.500px; width: 29px; margin-left: 2px; padding-left: 2px; flex: none; }
.size-on { background: #c6c6c6; color: #444; }
.grip { font-style: normal; font-size: 12px; line-height: 10px; color: #999; text-align: center; letter-spacing: 1px; margin-top: 2px; }

.ul-menu {
  position: absolute; left: 287px; top: 155px; width: 233px; height: 200px;
  background: #fff; border: 1px solid #d0d0d0; box-shadow: 1px 2px 3px rgba(0,0,0,.2);
  font-size: 15px; color: #555;
}
.ul-full { top: 153px; height: 346px; }
.ul-row { height: 31px; display: flex; align-items: center; padding-left: 13px; width: 207px; margin-left: 1px; }
.ul-on { background: #c4c4c4; }
.ul { width: 176px; height: 8px; display: block; }
.l1 { stroke: #222; stroke-width: 1.500; }
.l3 { stroke: #111; stroke-width: 3; }
.ld { stroke: #222; stroke-width: 1.500; stroke-dasharray: 2 2; }
.lh { stroke: #222; stroke-width: 1.500; stroke-dasharray: 10 5; }
.lp { stroke: #222; stroke-width: 1.500; stroke-dasharray: 10 3 2 3; }
.lpp { stroke: #222; stroke-width: 1.500; stroke-dasharray: 10 2 2 2 2 2; }
.lw { stroke: #333; stroke-width: 1.200; fill: none; }
.ul-none { height: 29px; line-height: 29px; padding-left: 14px; border-bottom: 1px solid #e4e4e4; margin-bottom: 2px; color: #666; }
.ul-more { height: 28px; line-height: 28px; padding-left: 44px; }
.ul-color { height: 28px; background: #c4c4c4; margin-left: 1px; display: flex; align-items: center; padding: 0 4px 0 5px; }
.ico-uc { width: 23px; height: 20px; flex: none; }
.ul-ctext { margin-left: 15px; flex: 1; color: #333; }
.ar-r { width: 0; height: 0; border: 4px solid transparent; border-left: 5px solid #666; border-right: 0; margin-right: 9px; }
.acc { text-decoration: underline; }
.grip-u { display: block; margin-top: 1px; }

.col-menu {
  position: absolute; left: 519px; top: 461px; width: 229px; height: 241px;
  background: #fff; border: 1px solid #c8c8c8; box-shadow: 1px 2px 3px rgba(0,0,0,.2);
  font-size: 14.500px; color: #666; padding: 0 1px;
}
.auto { height: 30px; display: flex; align-items: center; gap: 14px; padding-left: 4px; }
.auto-sw { width: 25px; height: 22px; border: 1px solid #888; background: #f0f0f0; padding: 2px; display: block; }
.auto-sw i { display: block; height: 100%; background: #000; }
.col-h { height: 26px; line-height: 26px; background: #ececec; padding-left: 11px; font-weight: 700; color: #666; font-size: 14.700px; }
.col-h2 { margin-top: 5px; }
.sw-row { display: grid; grid-template-columns: repeat(10, 16px); column-gap: 6.500px; padding: 3px 0 0 4px; }
.sw-row i { height: 15px; display: block; }
.sw-sh { padding-top: 6px; }
.sw-sh i { height: 76px; }
.t1 { background: #fff; border: 1px solid #ddd; } .t2 { background: #000; } .t3 { background: #e7e6e6; } .t4 { background: #44546a; } .t5 { background: #4472c4; } .t6 { background: #ed7d31; } .t7 { background: #a5a5a5; } .t8 { background: #ffc000; } .t9 { background: #5b9bd5; } .t10 { background: #70ad47; }
.s1 { background: linear-gradient(#f2f2f2 20%, #d9d9d9 20% 40%, #bfbfbf 40% 60%, #a6a6a6 60% 80%, #808080 80%); }
.s2 { background: linear-gradient(#808080 20%, #595959 20% 40%, #404040 40% 60%, #262626 60% 80%, #0d0d0d 80%); }
.s3 { background: linear-gradient(#d0cece 20%, #aeabab 20% 40%, #767171 40% 60%, #3a3838 60% 80%, #171616 80%); }
.s4 { background: linear-gradient(#d6dce4 20%, #adb9ca 20% 40%, #8496b0 40% 60%, #333f4f 60% 80%, #222a35 80%); }
.s5 { background: linear-gradient(#d9e2f3 20%, #b4c6e7 20% 40%, #8eaadb 40% 60%, #2f5496 60% 80%, #1f3864 80%); }
.s6 { background: linear-gradient(#fbe4d5 20%, #f7caac 20% 40%, #f4b083 40% 60%, #c45911 60% 80%, #833c0b 80%); }
.s7 { background: linear-gradient(#ededed 20%, #dbdbdb 20% 40%, #c9c9c9 40% 60%, #7b7b7b 60% 80%, #525252 80%); }
.s8 { background: linear-gradient(#fff2cc 20%, #ffe599 20% 40%, #ffd966 40% 60%, #bf8f00 60% 80%, #7f6000 80%); }
.s9 { background: linear-gradient(#deeaf6 20%, #bdd6ee 20% 40%, #9cc2e5 40% 60%, #2e74b5 60% 80%, #1f4e79 80%); }
.s10 { background: linear-gradient(#e2efd9 20%, #c5e0b3 20% 40%, #a8d08d 40% 60%, #538135 60% 80%, #375623 80%); }
.c1 { background: #c00000; } .c2 { background: #f00; } .c3 { background: #ffc000; } .c4 { background: #ff0; } .c5 { background: #92d050; } .c6 { background: #00b050; } .c7 { background: #00b0f0; } .c8 { background: #0070c0; } .c9 { background: #002060; } .c10 { background: #7030a0; }
.c-on { outline: 2px solid #f29436; outline-offset: -1px; }
.more-c { height: 26px; line-height: 26px; padding-left: 43px; margin-top: 5px; white-space: nowrap; }

.tip { position: absolute; background: #fff; border: 1px solid #c8c8c8; box-shadow: 1px 1px 2px rgba(0,0,0,.2); font-size: 15px; color: #666; text-align: center; white-space: nowrap; }
.tip-dbl { left: 377px; top: 231px; width: 133px; height: 29px; line-height: 27px; }
.tip-g { left: 647px; top: 682px; width: 53px; height: 30px; line-height: 28px; }

.foot { margin: 161px 0 0 -6px; }
.rule { width: 1818px; height: 16px; border-top: 11px solid #622423; border-bottom: 3px solid #622423; }
.foot-t { font: 400 37px/43px "Liberation Serif", serif; color: #111; margin-left: 6px; }
.foot-a { margin-top: 5px; letter-spacing: .8px; }
.foot-t sup { font-size: 24px; line-height: 0; }
```
